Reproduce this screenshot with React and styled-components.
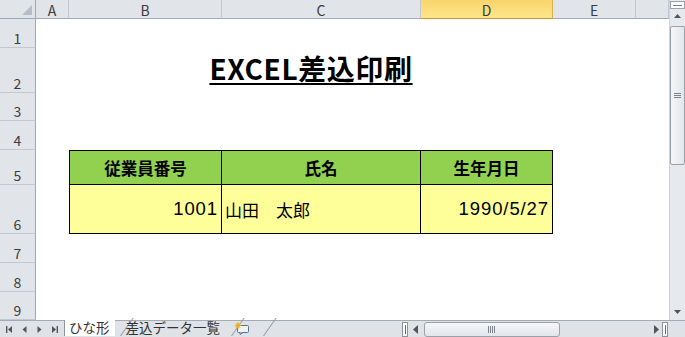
import React from "react";
import styled, { createGlobalStyle } from "styled-components";

const GlobalStyle = createGlobalStyle`
  html, body {
    margin: 0;
    padding: 0;
    background: #fff;
  }
  body {
    font-family: "Noto Sans CJK JP", "Liberation Sans", sans-serif;
  }
`;

const JP = `"Noto Sans CJK JP", "Liberation Sans", sans-serif`;
const NUM = `"Liberation Sans", "Noto Sans CJK JP", sans-serif`;

const Window = styled.div`
  width: 685px;
  height: 337px;
  display: grid;
  grid-template-columns: 1fr 16px;
  grid-template-rows: 320px 17px;
  overflow: hidden;
  background: #fff;
`;

const Sheet = styled.div`
  display: grid;
  grid-template-columns: 36px 33px 153px 199px 132px 83px 1fr;
  grid-template-rows: 19px 29px 45px 28px 29px 35px 49px 29px 29px 28px;
  background: #fff;
`;

const Corner = styled.div`
  position: relative;
  background: #e1e5ea;
  border-right: 1px solid #a2a9b1;
  border-bottom: 1px solid #a2a9b1;
  &::after {
    content: "";
    position: absolute;
    right: 3px;
    bottom: 3px;
    border-style: solid;
    border-width: 0 0 10px 10px;
    border-color: transparent transparent #b7bdc4 transparent;
  }
`;

const ColHead = styled.div`
  display: flex;
  align-items: center;
  justify-content: center;
  font-family: ${JP};
  font-size: 14px;
  color: #3c3c3c;
  background: ${(p) =>
    p.$selected ? "linear-gradient(#f9d46c, #ffe68a)" : "#e1e5ea"};
  border-right: 1px solid ${(p) => (p.$selected ? "#d6b04a" : "#c3c8ce")};
  border-bottom: 1px solid ${(p) => (p.$selected ? "#c39a36" : "#a2a9b1")};
  line-height: 1;
  padding-top: 1px;
`;

const RowHead = styled.div`
  display: flex;
  align-items: flex-end;
  justify-content: center;
  padding-bottom: 2px;
  font-family: ${JP};
  font-size: 14px;
  line-height: 1;
  color: #3c3c3c;
  background: #e1e5ea;
  border-right: 1px solid #a2a9b1;
  border-bottom: 1px solid #c3c8ce;
`;

const Title = styled.div`
  grid-column: 3 / 6;
  grid-row: 3;
  display: flex;
  align-items: center;
  justify-content: center;
  padding-bottom: 6px;
  font-family: ${JP};
  font-weight: 700;
  font-size: 28px;
  letter-spacing: 0.6px;
  line-height: 1;
  color: #000;
  text-decoration: underline;
  text-decoration-thickness: 2px;
  text-underline-offset: 3px;
`;

const Cell = styled.div`
  grid-column: ${(p) => p.$col};
  grid-row: ${(p) => p.$row};
  display: flex;
  align-items: center;
  justify-content: ${(p) =>
    p.$align === "right" ? "flex-end" : p.$align === "center" ? "center" : "flex-start"};
  padding: 0 3px;
  background: ${(p) => (p.$head ? "#92d050" : "#ffff99")};
  border-right: 1px solid #000;
  border-bottom: 1px solid #000;
  border-top: ${(p) => (p.$head ? "1px solid #000" : "none")};
  border-left: ${(p) => (p.$first ? "1px solid #000" : "none")};
  font-family: ${(p) => (p.$num ? NUM : JP)};
  font-weight: ${(p) => (p.$head ? 700 : 400)};
  font-size: ${(p) => (p.$head ? "16.5px" : p.$num ? "18.5px" : "17px")};
  letter-spacing: ${(p) => (p.$num ? "0.9px" : "0")};
  color: #000;
  white-space: nowrap;
`;

const VScroll = styled.div`
  display: flex;
  flex-direction: column;
  align-items: center;
  background: #e6e9ee;
  border-left: 1px solid #cfd3d8;
`;

const SplitBox = styled.div`
  width: 13px;
  height: 6px;
  margin-top: 1px;
  border: 1px solid #9ea4ab;
  background: #fff;
  display: flex;
  align-items: center;
  justify-content: center;
  &::after {
    content: "";
    width: 9px;
    height: 1px;
    background: #7b8188;
  }
`;

const ArrowBtn = styled.div`
  width: ${(p) => p.$w || 15}px;
  height: ${(p) => p.$h || 15}px;
  display: flex;
  align-items: center;
  justify-content: center;
  flex-shrink: 0;
`;

const VThumb = styled.div`
  width: 13px;
  height: 137px;
  margin-top: 2px;
  border: 1px solid #9aa1a9;
  border-radius: 2px;
  background: linear-gradient(90deg, #f5f6f8, #e3e6ea);
  display: flex;
  align-items: center;
  justify-content: center;
`;

const Spacer = styled.div`
  flex: 1;
`;

const BottomBar = styled.div`
  grid-column: 1 / -1;
  display: flex;
  align-items: stretch;
  background: #dfe3e8;
  border-top: 1px solid #a5abb2;
  font-family: ${JP};
`;

const NavGroup = styled.div`
  display: flex;
  align-items: center;
  width: 62px;
  padding-left: 2px;
`;

const NavBtn = styled.div`
  width: 15px;
  height: 16px;
  display: flex;
  align-items: center;
  justify-content: center;
`;

const Tab = styled.div`
  position: relative;
  display: flex;
  align-items: center;
  height: 16px;
  padding: ${(p) => p.$pad || "0 5px"};
  margin-top: -1px;
  background: ${(p) => (p.$active ? "#fff" : "transparent")};
  border-left: ${(p) => (p.$active ? "1px solid #8c939b" : "none")};
  font-size: 13.5px;
  line-height: 1;
  color: #333;
  white-space: nowrap;
  &::after {
    content: "";
    position: absolute;
    right: -6px;
    bottom: 0;
    width: 1px;
    height: 18px;
    background: #8c939b;
    transform: skewX(-35deg);
    transform-origin: bottom;
  }
`;

const HScroll = styled.div`
  display: flex;
  align-items: center;
  margin-left: auto;
  width: 266px;
  padding-right: 17px;
`;

const Handle = styled.div`
  width: 4px;
  height: 13px;
  border: 1px solid #8d939a;
  background: #fff;
  display: flex;
  justify-content: center;
  &::after {
    content: "";
    width: 1px;
    height: 9px;
    margin-top: 2px;
    background: #6b7077;
  }
`;

const HThumb = styled.div`
  width: 134px;
  height: 13px;
  border: 1px solid #9aa1a9;
  border-radius: 3px;
  background: linear-gradient(#f6f7f9, #e2e5e9);
  display: flex;
  align-items: center;
  justify-content: center;
`;

const Tri = ({ dir, color = "#555" }) => {
  const pts = {
    up: "1,6 8,6 4.5,2",
    down: "1,2 8,2 4.5,6",
    left: "6,0 6,9 1,4.5",
    right: "2,0 2,9 7,4.5",
  }[dir];
  return (
    <svg width="9" height="9" viewBox="0 0 9 9">
      <polygon points={pts} fill={color} />
    </svg>
  );
};

const NavIcon = ({ kind }) => (
  <svg width="9" height="9" viewBox="0 0 9 9">
    {kind === "first" && (
      <>
        <rect x="1" y="1" width="1.4" height="7" fill="#555" />
        <polygon points="7,1 7,8 3,4.5" fill="#555" />
      </>
    )}
    {kind === "prev" && <polygon points="6.5,1 6.5,8 2.5,4.5" fill="#555" />}
    {kind === "next" && <polygon points="2.5,1 2.5,8 6.5,4.5" fill="#555" />}
    {kind === "last" && (
      <>
        <polygon points="2,1 2,8 6,4.5" fill="#555" />
        <rect x="6.6" y="1" width="1.4" height="7" fill="#555" />
      </>
    )}
  </svg>
);

const NewSheetIcon = () => (
  <svg width="16" height="13" viewBox="0 0 16 13">
    <rect x="3.5" y="3.5" width="11" height="7" rx="1" fill="#eef3fa" stroke="#5a6f8c" />
    <path d="M6 10.5 L6 12.5 L9 10.5" fill="#eef3fa" stroke="#5a6f8c" />
    <circle cx="4" cy="3.5" r="2.2" fill="#f2c230" />
    <path d="M4 0 V7 M0.5 3.5 H7.5 M1.5 1 L6.5 6 M6.5 1 L1.5 6" stroke="#e8a818" strokeWidth="0.8" />
  </svg>
);

const Grip = ({ vertical }) =>
  vertical ? (
    <svg width="7" height="7" viewBox="0 0 7 7">
      {[1, 3, 5].map((y) => (
        <rect key={y} x="0" y={y} width="7" height="1" fill="#7d838a" />
      ))}
    </svg>
  ) : (
    <svg width="8" height="7" viewBox="0 0 8 7">
      {[0, 2, 4, 6].map((x) => (
        <rect key={x} x={x} y="0" width="1" height="7" fill="#7d838a" />
      ))}
    </svg>
  );

const columns = [
  { label: "A" },
  { label: "B" },
  { label: "C" },
  { label: "D", selected: true },
  { label: "E" },
  { label: "" },
];

const rows = ["1", "2", "3", "4", "5", "6", "7", "8", "9"];

const headers = [
  { text: "従業員番号", col: 3 },
  { text: "氏名", col: 4 },
  { text: "生年月日", col: 5 },
];

const record = [
  { text: "1001", col: 3, align: "right", num: true },
  { text: "山田　太郎", col: 4, align: "left" },
  { text: "1990/5/27", col: 5, align: "right", num: true },
];

export default function App() {
  return (
    <>
      <GlobalStyle />
      <Window>
        <Sheet>
          <Corner />
          {columns.map((c, i) => (
            <ColHead key={i} $selected={c.selected}>
              {c.label}
            </ColHead>
          ))}
          {rows.map((r, i) => (
            <RowHead key={r} style={{ gridRow: i + 2, gridColumn: 1 }}>
              {r}
            </RowHead>
          ))}
          <Title>EXCEL差込印刷</Title>
          {headers.map((h, i) => (
            <Cell key={h.text} $head $col={h.col} $row={6} $align="center" $first={i === 0}>
              {h.text}
            </Cell>
          ))}
          {record.map((d, i) => (
            <Cell
              key={d.text}
              $col={d.col}
              $row={7}
              $align={d.align}
              $num={d.num}
              $first={i === 0}
            >
              {d.text}
            </Cell>
          ))}
        </Sheet>

        <VScroll>
          <SplitBox />
          <ArrowBtn $h={15}>
            <Tri dir="up" />
          </ArrowBtn>
          <VThumb>
            <Grip vertical />
          </VThumb>
          <Spacer />
          <ArrowBtn $h={16}>
            <Tri dir="down" />
          </ArrowBtn>
        </VScroll>

        <BottomBar>
          <NavGroup>
            <NavBtn><NavIcon kind="first" /></NavBtn>
            <NavBtn><NavIcon kind="prev" /></NavBtn>
            <NavBtn><NavIcon kind="next" /></NavBtn>
            <NavBtn><NavIcon kind="last" /></NavBtn>
          </NavGroup>
          <Tab $active $pad="0 5px 0 4px">ひな形</Tab>
          <Tab $pad="0 6px 0 11px">差込データ一覧</Tab>
          <Tab $pad="0 8px 0 8px">
            <NewSheetIcon />
          </Tab>
          <HScroll>
            <Handle />
            <ArrowBtn $h={16} $w={16}>
              <Tri dir="left" />
            </ArrowBtn>
            <HThumb>
              <Grip />
            </HThumb>
            <Spacer />
            <ArrowBtn $h={16} $w={12}>
              <Tri dir="right" />
            </ArrowBtn>
            <Handle />
          </HScroll>
        </BottomBar>
      </Window>
    </>
  );
}
